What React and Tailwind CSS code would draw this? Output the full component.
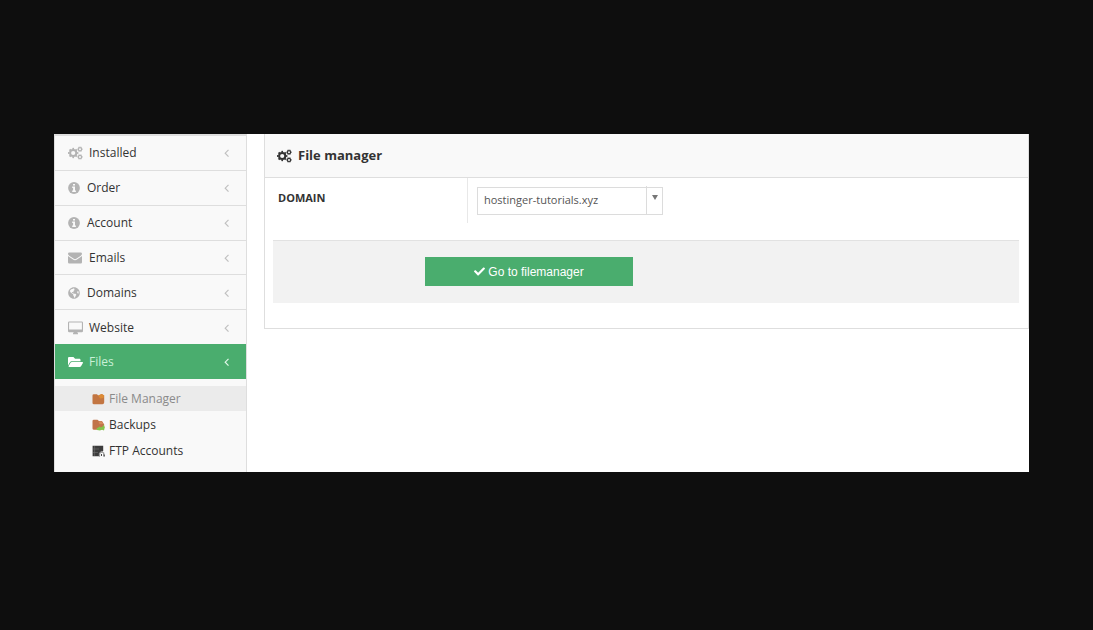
import { useState } from 'react';
import { FaCheck, FaFolderOpen, FaGlobeAmericas } from 'react-icons/fa';

const GearsIcon = ({ className }) => (
    <svg viewBox="0 0 15 14" className={className} fill="none" stroke="currentColor" aria-hidden="true">
        <circle cx="5.2" cy="7" r="3.1" strokeWidth="2" />
        <circle cx="5.2" cy="7" r="4.5" strokeWidth="1.4" pathLength="80" strokeDasharray="5 5" strokeDashoffset="2.5" />
        <circle cx="12" cy="3.2" r="1.6" strokeWidth="1.2" />
        <circle cx="12" cy="3.2" r="2.4" strokeWidth="0.8" pathLength="60" strokeDasharray="5 5" strokeDashoffset="2.5" />
        <circle cx="12" cy="10.9" r="1.6" strokeWidth="1.2" />
        <circle cx="12" cy="10.9" r="2.4" strokeWidth="0.8" pathLength="60" strokeDasharray="5 5" strokeDashoffset="2.5" />
    </svg>
);

const InfoIcon = ({ className }) => (
    <svg viewBox="0 0 12 12" className={className} aria-hidden="true">
        <circle cx="6" cy="6" r="5.9" fill="currentColor" />
        <path d="M5 2 H7 V3.6 H5 Z M4.2 4.6 H7 V8.5 H7.9 V9.9 H4.2 V8.5 H5.1 V6 H4.2 Z" fill="#f9f9f9" />
    </svg>
);

const EnvelopeIcon = ({ className }) => (
    <svg viewBox="0 0 14 14" className={className} fill="currentColor" aria-hidden="true">
        <path d="M0 2.8 Q0 1.5 1.3 1.5 H12.7 Q14 1.5 14 2.8 Q14 3.8 12.8 4.7 L8.6 7.6 Q7 8.8 5.4 7.6 L1.2 4.7 Q0 3.8 0 2.8 Z" />
        <path d="M0 4.9 L5 8.5 Q7 9.9 9 8.5 L14 4.9 V11.3 Q14 12.5 12.8 12.5 H1.2 Q0 12.5 0 11.3 Z" />
    </svg>
);

const DesktopIcon = ({ className }) => (
    <svg viewBox="0 0 15 14" className={className} aria-hidden="true">
        <path
            d="M1.2 0.5 H13.8 Q15 0.5 15 1.7 V10 Q15 11.2 13.8 11.2 H9.3 L10 12.5 V13.2 H5 V12.5 L5.7 11.2 H1.2 Q0 11.2 0 10 V1.7 Q0 0.5 1.2 0.5 Z M1.1 1.6 V8.6 H13.9 V1.6 Z"
            fill="currentColor"
            fillRule="evenodd"
        />
    </svg>
);

const AngleLeftIcon = ({ className }) => (
    <svg viewBox="0 0 12 12" className={className} fill="none" stroke="currentColor" aria-hidden="true">
        <path d="M7.5 2.8 L4.2 6.2 L7.5 9.6" strokeWidth="1.2" />
    </svg>
);

const sections = [
    { name: 'Installed', icon: GearsIcon, iconClass: 'w-[15px] h-[14px] mr-[6px]' },
    { name: 'Order', icon: InfoIcon, iconClass: 'w-3 h-3 mr-[7px]' },
    { name: 'Account', icon: InfoIcon, iconClass: 'w-3 h-3 mr-[7px]' },
    { name: 'Emails', icon: EnvelopeIcon, iconClass: 'w-[14px] h-[14px] mr-[7px]' },
    { name: 'Domains', icon: FaGlobeAmericas, iconClass: 'w-3 h-3 mr-[7px]' },
    { name: 'Website', icon: DesktopIcon, iconClass: 'w-[15px] h-[14px] mr-[6px]' },
    { name: 'Files', icon: FaFolderOpen, iconClass: 'w-[15px] h-[14px] mr-[6px]' },
];

const FolderIcon = () => (
    <svg viewBox="0 0 13 12" className="w-[13px] h-3" aria-hidden="true">
        <path d="M0.5 2.5 Q0.5 1.2 1.8 1.2 H5 L6.2 2.4 L9.8 1 L12.2 2.6 V9.6 Q12 11.2 10.5 11.2 H2 Q0.5 11.2 0.5 10 Z" fill="#c27541" />
        <path d="M6.2 2.6 L9.8 1 L12.2 2.6 L11.5 5 L8 5.5 Z" fill="#dc8a35" />
    </svg>
);

const BackupIcon = () => (
    <svg viewBox="0 0 13 12" className="w-[13px] h-3" aria-hidden="true">
        <path d="M0.5 2 Q0.5 0.8 1.8 0.8 H5.5 L7 2 H10 L12.2 5.5 V9 L10 10.8 H2 Q0.5 10.8 0.5 9.6 Z" fill="#c1744a" />
        <path d="M6.5 2.4 L9.5 2.2 L11.4 5 L7.5 5.2 Z" fill="#d68b5c" />
        <path d="M4.5 9.6 L8.2 7.2 V8.4 L10.5 7.8 L11.5 5.8 L12.8 8.2 L12 11.4 L9.5 10.6 L8.2 11.6 L5 11 Z" fill="#84c64c" />
    </svg>
);

const FtpIcon = () => (
    <svg viewBox="0 0 13 12" className="w-[13px] h-3" aria-hidden="true">
        <path d="M0.6 0.8 H11.2 V6 L8 8 V11.2 H0.6 Z" fill="#3c3c3c" />
        <path d="M1 4 H7 M1 7.5 H6 M2.6 1 V11" stroke="#707070" strokeWidth="0.6" />
        <path d="M7.5 11.4 V8.5 L9.5 6.5 L11.7 8 V11.4" fill="none" stroke="#9a9a9a" strokeWidth="1.3" />
        <path d="M9.5 9 V11 M12.3 9.5 V11.5" stroke="#4a4a4a" strokeWidth="1" />
    </svg>
);

const fileLinks = [
    { name: 'File Manager', icon: FolderIcon },
    { name: 'Backups', icon: BackupIcon },
    { name: 'FTP Accounts', icon: FtpIcon },
];

const Sidebar = () => {
    const [active, setActive] = useState('Files');
    const [page, setPage] = useState('File Manager');

    return (
        <nav className="w-[193px] shrink-0 bg-[#f9f9f9] border border-b-0 border-[#dedede] text-xs text-[#333]">
            <ul className="grid grid-rows-7 h-[244px]">
                {sections.map(({ name, icon: Icon, iconClass }) => (
                    <li key={name}>
                        <button
                            type="button"
                            onClick={() => setActive(name)}
                            className={
                                active === name
                                    ? 'flex items-center w-full h-full px-[13px] bg-[#4aad6e] text-[#c9f0d6]'
                                    : 'flex items-center w-full h-full px-[13px] pt-px border-t border-[#dedede] font-medium'
                            }
                        >
                            <Icon className={`${iconClass} ${active === name ? 'text-white' : 'text-[#b3b3b3]'}`} />
                            {name}
                            <AngleLeftIcon
                                className={`ml-auto w-3 h-3 ${active === name ? 'text-[#e2f7e9]' : 'text-[#c0c0c0]'}`}
                            />
                        </button>
                    </li>
                ))}
            </ul>

            {/* Files submenu */}
            <ul className="flex flex-col gap-px pt-[7px] pb-[9px]">
                {fileLinks.map(({ name, icon: Icon }) => (
                    <li key={name}>
                        <a
                            href="#"
                            onClick={() => setPage(name)}
                            className={
                                page === name
                                    ? 'flex items-center gap-1 h-[25px] pl-[37px] bg-[#ebebeb] text-[#8a8a8a]'
                                    : 'flex items-center gap-1 h-[25px] pl-[37px]'
                            }
                        >
                            <Icon />
                            {name}
                        </a>
                    </li>
                ))}
            </ul>
        </nav>
    );
};

const App = () => {
    const [domain, setDomain] = useState('hostinger-tutorials.xyz');

    return (
        <div className="min-h-screen bg-[#0e0e0e] pt-[134px] pb-10 pl-[54px] pr-16 font-['Open_Sans',sans-serif]">
            <div className="flex items-start bg-white">
                <Sidebar />

                {/* Main panel */}
                <main className="flex-1 ml-[17px] border border-t-0 border-[#dedede] text-[#333]">
                    <header className="flex items-center gap-[6px] h-11 px-3 bg-[#f9f9f9] border-b border-[#dedede]">
                        <GearsIcon className="w-[15px] h-[14px]" />
                        <h1 className="text-[13px] font-bold">File manager</h1>
                    </header>

                    <form onSubmit={(e) => e.preventDefault()} className="pl-2 pr-[9px] pb-[25px]">
                        <div className="flex h-[45px]">
                            <label
                                htmlFor="domain"
                                className="w-[195px] pt-[11px] pl-[5px] border-r border-[#e8e8e8] text-[11px] leading-[18px] font-bold"
                            >
                                DOMAIN
                            </label>
                            <div className="relative ml-[9px] mt-2 w-[186px] h-7">
                                <select
                                    id="domain"
                                    value={domain}
                                    onChange={(e) => setDomain(e.target.value)}
                                    className="appearance-none w-full h-7 pl-[6px] pr-5 pb-[2px] bg-white border border-[#dcdcdc] text-[11px] text-[#555]"
                                >
                                    <option>hostinger-tutorials.xyz</option>
                                </select>
                                <span className="absolute right-0 top-0 flex justify-center w-[17px] h-7 pt-[9px] border-l border-[#dcdcdc] pointer-events-none">
                                    <svg viewBox="0 0 6 5" className="w-[6px] h-[5px]" aria-hidden="true">
                                        <path d="M0 0 H6 L3 5 Z" fill="#777" />
                                    </svg>
                                </span>
                            </div>
                        </div>

                        <div className="mt-[17px] pt-4 pb-[17px] pl-[152px] bg-[#f2f2f2] border-t border-[#e2e2e2]">
                            <button
                                type="submit"
                                className="flex items-center justify-center gap-[3px] w-[208px] h-[29px] bg-[#4aad6e] font-['Liberation_Sans',sans-serif] text-xs text-white"
                            >
                                <FaCheck className="w-[11px] h-[11px]" />
                                Go to filemanager
                            </button>
                        </div>
                    </form>
                </main>
            </div>
        </div>
    );
};

export default App;
